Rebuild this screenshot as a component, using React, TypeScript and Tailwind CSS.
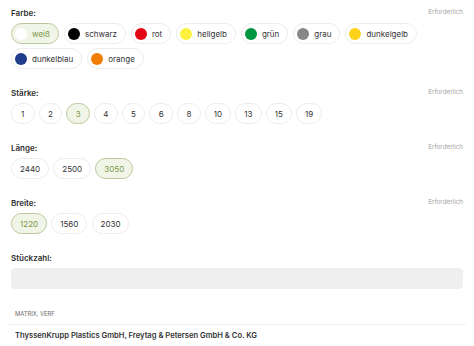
import clsx from "clsx";

// ── Daten ────────────────────────────────────────────────────────────────────

const FARBEN = [
  { name: "weiß", color: "#ffffff" },
  { name: "schwarz", color: "#000000" },
  { name: "rot", color: "#e30613" },
  { name: "hellgelb", color: "#fff23f" },
  { name: "grün", color: "#00953f" },
  { name: "grau", color: "#878787" },
  { name: "dunkelgelb", color: "#ffd21a" },
  { name: "dunkelblau", color: "#203c8c" },
  { name: "orange", color: "#f07d00" },
];

const STAERKE = ["1", "2", "3", "4", "5", "6", "8", "10", "13", "15", "19"];
const LAENGE = ["2440", "2500", "3050"];
const BREITE = ["1220", "1560", "2030"];

// ── Bausteine ────────────────────────────────────────────────────────────────

function Header({ label, required }: { label: string; required?: boolean }) {
  return (
    <div className="flex items-center justify-between h-[12px]">
      <span className="text-[8px] font-semibold text-[#2f2f2f]">{label}</span>
      {required && <span className="text-[6.3px] text-[#a3a3a3]">Erforderlich</span>}
    </div>
  );
}

function Pill({ value, active }: { value: string; active?: boolean }) {
  return (
    <button
      className={clsx(
        "h-[21px] min-w-[23.5px] px-[8px] rounded-full border text-[8px] flex items-center justify-center",
        active
          ? "bg-[#f1f5e7] border-[#b9c99c] text-[#7a9847]"
          : "bg-white border-[#ececec] text-[#333333]"
      )}
    >
      {value}
    </button>
  );
}

function Section({
  label,
  options,
  active,
}: {
  label: string;
  options: string[];
  active: string;
}) {
  return (
    <div className="mt-[18px]">
      <Header label={label} required />
      <div className="mt-[4px] flex flex-wrap gap-[4.2px]">
        {options.map((o) => (
          <Pill key={o} value={o} active={o === active} />
        ))}
      </div>
    </div>
  );
}

// ── App ──────────────────────────────────────────────────────────────────────

export default function App() {
  return (
    <div
      className="w-[474px] h-[346px] bg-white overflow-hidden px-[11px] pt-[7px]"
      style={{ fontFamily: "Inter, 'Noto Sans', sans-serif" }}
    >
      {/* Farbe */}
      <div>
        <Header label="Farbe:" required />
        <div className="mt-[4px] flex flex-wrap gap-x-[5px] gap-y-[4px]">
          {FARBEN.map((f, i) => (
            <button
              key={f.name}
              className={clsx(
                "h-[21px] rounded-full border pl-[3px] pr-[8px] flex items-center gap-[5px] text-[8px]",
                i === 0
                  ? "bg-[#f1f5e7] border-[#b9c99c] text-[#7a9847]"
                  : "bg-white border-[#ececec] text-[#333333]"
              )}
            >
              <span className="w-[12px] h-[12px] rounded-full" style={{ backgroundColor: f.color }} />
              {f.name}
            </button>
          ))}
        </div>
      </div>

      <Section label="Stärke:" options={STAERKE} active="3" />
      <Section label="Länge:" options={LAENGE} active="3050" />
      <Section label="Breite:" options={BREITE} active="1220" />

      {/* Stückzahl */}
      <div className="mt-[18px]">
        <Header label="Stückzahl:" />
        <div className="mt-[4px] h-[21px] rounded-[4px] bg-[#efefef]" />
      </div>

      {/* Hersteller */}
      <div className="mt-[20px] -mx-[3px]">
        <div className="px-[7px] pb-[5px] h-[15px] flex items-center text-[5.8px] uppercase text-[#6b6b6b]">
          Matrix, Verf
        </div>
        <div className="border-t border-[#f0f0f0] px-[7px] pt-[5px] text-[7.6px] font-semibold text-[#333333]">
          ThyssenKrupp Plastics GmbH, Freytag &amp; Petersen GmbH &amp; Co. KG
        </div>
      </div>
    </div>
  );
}
